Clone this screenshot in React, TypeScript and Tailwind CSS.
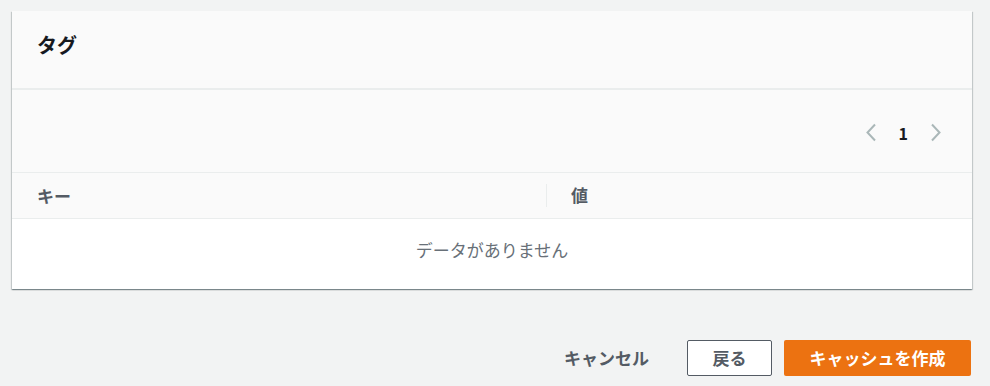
import React from 'react';

const font = { fontFamily: '"Noto Sans CJK JP", "Noto Sans", sans-serif' };

const App: React.FC = () => {
  return (
    <div className="w-[990px] h-[386px] bg-[#f2f3f3] pt-[11px] px-[12px] box-border" style={font}>
      <div className="w-[960px] bg-white shadow-[0_1px_1px_0_rgba(0,28,36,0.3),1px_1px_1px_0_rgba(0,28,36,0.15),-1px_1px_1px_0_rgba(0,28,36,0.15)]">
        {/* header */}
        <div className="h-[79px] bg-[#fafafa] border-b-2 border-[#eaeded] px-[25px] pb-[10px] flex items-center">
          <h2 className="text-[20px] font-bold text-[#16191f] leading-none">タグ</h2>
        </div>

        {/* pagination */}
        <div className="h-[82px] bg-[#fafafa] flex items-center justify-end pr-[30px] pt-[3px]">
          <div className="flex items-center gap-[22px]">
            <svg width="12" height="19" viewBox="0 0 12 19" fill="none" stroke="#aab7b8" strokeWidth="2">
              <path d="M10 1.5 L2.5 9.5 L10 17.5" />
            </svg>
            <span className="text-[16px] font-bold text-[#16191f] leading-none">1</span>
            <svg width="12" height="19" viewBox="0 0 12 19" fill="none" stroke="#aab7b8" strokeWidth="2">
              <path d="M2 1.5 L9.5 9.5 L2 17.5" />
            </svg>
          </div>
        </div>

        {/* table header */}
        <div className="h-[47px] bg-[#fafafa] border-y border-[#eaeded] flex items-center text-[17px] font-bold text-[#545b64] pb-[3px]">
          <div className="w-[535px] pl-[25px] border-r border-[#eaeded] h-[23px] mt-[3px] flex items-center">キー</div>
          <div className="pl-[24px] leading-none">値</div>
        </div>

        {/* empty */}
        <div className="h-[70px] flex items-center justify-center pb-[8px] text-[17px] text-[#687078]">
          データがありません
        </div>
      </div>

      {/* actions */}
      <div className="flex justify-end items-center mt-[51px] pr-[7px]">
        <span className="text-[17px] font-bold text-[#545b64] mr-[38px]">キャンセル</span>
        <button className="w-[85px] h-[36px] border border-[#545b64] rounded-[2px] bg-white text-[17px] font-bold text-[#545b64] mr-[12px]">
          戻る
        </button>
        <button className="w-[187px] h-[36px] rounded-[2px] bg-[#ec7211] text-[17px] font-bold text-white">
          キャッシュを作成
        </button>
      </div>
    </div>
  );
};

export default App;
